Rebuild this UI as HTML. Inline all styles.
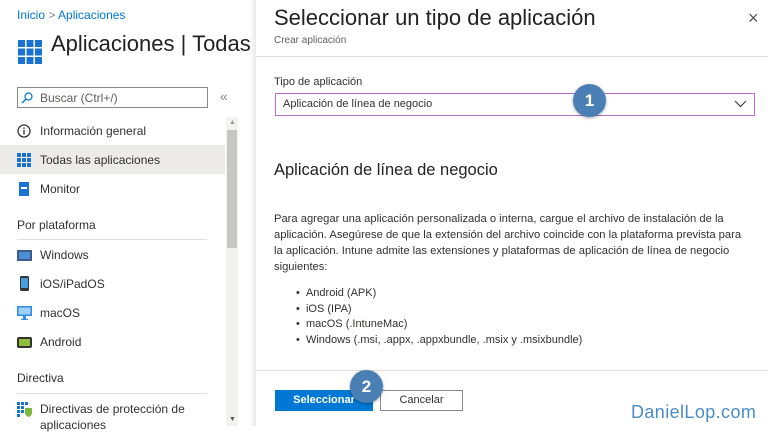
<!DOCTYPE html>
<html><head><meta charset="utf-8"><style>
*{margin:0;padding:0;box-sizing:border-box}
body{width:768px;height:426px;overflow:hidden;background:#fff;font-family:"Liberation Sans",sans-serif;color:#323130;position:relative}
.a{position:absolute;white-space:nowrap}
.it{position:absolute;left:17px;font-size:12px;color:#323130}
.ic{position:absolute;left:17px}
</style></head><body>
<div class="a" style="left:17px;top:8px;font-size:12px;color:#0078d4">Inicio <span style="color:#888">&gt;</span> Aplicaciones</div>
<svg class="a" style="left:18px;top:40px" width="24" height="24" viewBox="0 0 24 24"><g fill="#1a73d0"><rect x="0" y="0" width="7" height="7"/><rect x="8.5" y="0" width="7" height="7"/><rect x="17" y="0" width="7" height="7"/><rect x="0" y="8.5" width="7" height="7"/><rect x="8.5" y="8.5" width="7" height="7"/><rect x="17" y="8.5" width="7" height="7"/><rect x="0" y="17" width="7" height="7"/><rect x="8.5" y="17" width="7" height="7"/><rect x="17" y="17" width="7" height="7"/></g></svg>
<div class="a" style="left:51px;top:31px;font-size:22px;color:#222">Aplicaciones <span style="font-weight:300">| Todas</span></div>
<div class="a" style="left:17px;top:87px;width:191px;height:21px;border:1px solid #8a8886"></div>
<svg class="a" style="left:21px;top:92px" width="12" height="12"><circle cx="7.5" cy="4.5" r="3.5" stroke="#0078d4" fill="none" stroke-width="1.2"/><path d="M5 7L1 11" stroke="#0078d4" stroke-width="1.3"/></svg>
<div class="a" style="left:40px;top:91px;font-size:12px;color:#605e5c">Buscar (Ctrl+/)</div>
<div class="a" style="left:220px;top:88px;font-size:14px;color:#888">«</div>
<div class="a" style="left:0;top:145px;width:225px;height:29px;background:#edebe9"></div>
<div class="a" style="left:226px;top:117px;width:12px;height:309px;background:#f3f2f1"></div>
<div class="a" style="left:227px;top:130px;width:10px;height:118px;background:#c8c6c4"></div>
<div class="a" style="left:229px;top:119px;font-size:7px;color:#999">▲</div>
<div class="a" style="left:229px;top:416px;font-size:7px;color:#555">▼</div>
<svg class="ic" style="top:124px" width="14" height="14"><circle cx="7" cy="7" r="6" fill="none" stroke="#333" stroke-width="1.3"/><rect x="6.3" y="6" width="1.4" height="4.5" fill="#333"/><rect x="6.3" y="3.5" width="1.4" height="1.4" fill="#333"/></svg>
<div class="it" style="left:40px;top:124px">Información general</div>
<svg class="ic" style="top:153px" width="14" height="14"><g fill="#1a73d0"><rect x="0" y="0" width="4" height="4"/><rect x="5" y="0" width="4" height="4"/><rect x="10" y="0" width="4" height="4"/><rect x="0" y="5" width="4" height="4"/><rect x="5" y="5" width="4" height="4"/><rect x="10" y="5" width="4" height="4"/><rect x="0" y="10" width="4" height="4"/><rect x="5" y="10" width="4" height="4"/><rect x="10" y="10" width="4" height="4"/></g></svg>
<div class="it" style="left:40px;top:153px">Todas las aplicaciones</div>
<svg class="ic" style="top:182px" width="14" height="14"><rect x="2" y="0" width="10" height="14" fill="#1a73d0"/><rect x="4" y="5" width="6" height="2" fill="#fff"/></svg>
<div class="it" style="left:40px;top:182px">Monitor</div>
<div class="it" style="top:218px;color:#323130">Por plataforma</div>
<div class="a" style="left:17px;top:239px;width:190px;height:1px;background:#e1dfdd"></div>
<svg class="ic" style="top:250px" width="15" height="11"><rect width="15" height="11" fill="#3d5d86"/><rect x="2" y="2" width="11" height="7" fill="#4b8fd6"/></svg>
<div class="it" style="left:40px;top:248px">Windows</div>
<svg class="ic" style="top:276px" width="15" height="15"><rect x="3" y="0" width="9" height="15" rx="1.5" fill="#333"/><rect x="4" y="2" width="7" height="10" fill="#4a9be0"/></svg>
<div class="it" style="left:40px;top:277px">iOS/iPadOS</div>
<svg class="ic" style="top:306px" width="15" height="14"><rect width="15" height="10" fill="#2c8ce8"/><rect x="1.5" y="1.5" width="12" height="7" fill="#9fd1f7"/><rect x="6" y="10" width="3" height="3" fill="#2c8ce8"/><rect x="4" y="13" width="7" height="1" fill="#2c8ce8"/></svg>
<div class="it" style="left:40px;top:306px">macOS</div>
<svg class="ic" style="top:337px" width="15" height="11"><rect width="15" height="11" rx="2" fill="#333"/><rect x="2" y="2" width="11" height="7" fill="#8fbf3a"/></svg>
<div class="it" style="left:40px;top:335px">Android</div>
<div class="it" style="top:371px">Directiva</div>
<div class="a" style="left:17px;top:393px;width:190px;height:1px;background:#e1dfdd"></div>
<svg class="ic" style="top:402px" width="15" height="15"><g fill="#1a73d0"><rect x="0" y="0" width="3" height="3"/><rect x="4" y="0" width="3" height="3"/><rect x="8" y="0" width="3" height="3"/><rect x="0" y="4" width="3" height="3"/><rect x="4" y="4" width="3" height="3"/><rect x="0" y="8" width="3" height="3"/><rect x="4" y="8" width="3" height="3"/><rect x="0" y="12" width="3" height="3"/></g><path d="M8 6h7v5c0 2-2 3.5-3.5 4C10 14.5 8 13 8 11z" fill="#7cba3d"/></svg>
<div class="it" style="left:40px;top:401px;line-height:16px">Directivas de protección de<br>aplicaciones</div>

<div class="a" style="left:250px;top:0;width:8px;height:426px;background:linear-gradient(to right,rgba(0,0,0,0),rgba(0,0,0,.12))"></div>
<div class="a" style="left:256px;top:0;width:512px;height:426px;background:#fff"></div>
<div class="a" style="left:274px;top:5px;font-size:22px;color:#222">Seleccionar un tipo de aplicación</div>
<div class="a" style="left:274px;top:35px;font-size:10px;color:#605e5c">Crear aplicación</div>
<div class="a" style="left:748px;top:8px;font-size:18px;color:#555">×</div>
<div class="a" style="left:256px;top:56px;width:512px;height:1px;background:#e1dfdd"></div>
<div class="a" style="left:274px;top:76px;font-size:11px;color:#323130">Tipo de aplicación</div>
<div class="a" style="left:275px;top:93px;width:480px;height:23px;border:1px solid #b86fcb"></div>
<div class="a" style="left:283px;top:98px;font-size:11px;color:#323130">Aplicación de línea de negocio</div>
<svg class="a" style="left:734px;top:100px" width="13" height="8"><path d="M1 1l5.5 5.5L12 1" stroke="#444" fill="none" stroke-width="1.2"/></svg>
<div class="a" style="left:573px;top:84px;width:33px;height:33px;border-radius:50%;background:#4a7fb5;box-shadow:0 1px 3px rgba(0,0,0,.35);color:#fff;font-size:17px;font-weight:bold;text-align:center;line-height:33px">1</div>
<div class="a" style="left:274px;top:161px;font-size:16.5px;color:#222">Aplicación de línea de negocio</div>
<div class="a" style="left:274px;top:211px;font-size:11.2px;line-height:16px;color:#323130;white-space:normal;width:470px">Para agregar una aplicación personalizada o interna, cargue el archivo de instalación de la aplicación. Asegúrese de que la extensión del archivo coincide con la plataforma prevista para la aplicación. Intune admite las extensiones y plataformas de aplicación de línea de negocio siguientes:</div>
<div class="a" style="left:296px;top:286px;font-size:11px;line-height:15.5px;color:#323130">• &nbsp;Android (APK)<br>• &nbsp;iOS (IPA)<br>• &nbsp;macOS (.IntuneMac)<br>• &nbsp;Windows (.msi, .appx, .appxbundle, .msix y .msixbundle)</div>
<div class="a" style="left:256px;top:370px;width:512px;height:1px;background:#e1dfdd"></div>
<div class="a" style="left:275px;top:390px;width:98px;height:21px;background:#0078d4;color:#fff;font-size:11px;font-weight:bold;text-align:center;line-height:21px">Seleccionar</div>
<div class="a" style="left:380px;top:390px;width:83px;height:21px;border:1px solid #8a8886;font-size:11px;text-align:center;line-height:19px">Cancelar</div>
<div class="a" style="left:350px;top:370px;width:33px;height:33px;border-radius:50%;background:#4a7fb5;box-shadow:0 1px 3px rgba(0,0,0,.35);color:#fff;font-size:17px;font-weight:bold;text-align:center;line-height:33px">2</div>
<div class="a" style="left:631px;top:402px;font-size:18px;color:#4a8cc7;font-family:'Liberation Sans',sans-serif;letter-spacing:0.4px">DanielLop.com</div>
</body></html>
